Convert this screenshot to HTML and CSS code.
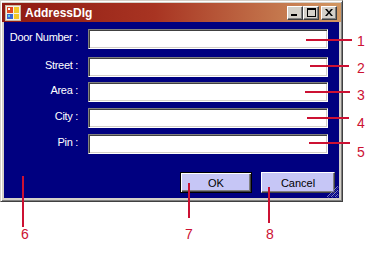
FILE: index.html
```html
<!DOCTYPE html>
<html lang="en">
<head>
    <meta charset="UTF-8">
    <title>AddressDlg</title>
    <link rel="stylesheet" href="styles.css">
</head>
<body>
    <div class="window">
        <div class="titlebar">
            <svg class="app-icon" width="16" height="16" viewBox="0 0 16 16">
                <rect x="0.5" y="0.5" width="15" height="15" fill="#f4f0e8" stroke="#c8b8a0"/>
                <rect x="2" y="2" width="6" height="6" fill="#e04a20"/>
                <rect x="9" y="2" width="5" height="6" fill="#f2c828"/>
                <rect x="2" y="9" width="6" height="5" fill="#3a66d0"/>
                <rect x="3" y="10" width="2" height="2" fill="#60d0e0"/>
                <rect x="9" y="9" width="5" height="5" fill="#f2c828"/>
                <rect x="3" y="3" width="2" height="2" fill="#ffffff"/>
            </svg>
            <span class="title">AddressDlg</span>
            <div class="caption-buttons">
                <div class="cap">
                    <svg width="8" height="7" viewBox="0 0 8 7"><rect x="0" y="5" width="6" height="2" fill="#000"/></svg>
                </div>
                <div class="cap">
                    <svg width="9" height="9" viewBox="0 0 9 9"><rect x="0.5" y="0.5" width="8" height="8" fill="none" stroke="#000"/><rect x="0" y="0" width="9" height="2" fill="#000"/></svg>
                </div>
                <div class="cap close">
                    <svg width="8" height="7" viewBox="0 0 8 7"><path d="M0 0h2l2 2.5 2-2.5h2l-3 3.5 3 3.5h-2l-2-2.5-2 2.5h-2l3-3.5z" fill="#000"/></svg>
                </div>
            </div>
        </div>

        <div class="client">
            <div class="fields">
                <div class="row">
                    <label for="door">Door Number :</label>
                    <input type="text" id="door">
                </div>
                <div class="row">
                    <label for="street">Street :</label>
                    <input type="text" id="street">
                </div>
                <div class="row">
                    <label for="area">Area :</label>
                    <input type="text" id="area">
                </div>
                <div class="row">
                    <label for="city">City :</label>
                    <input type="text" id="city">
                </div>
                <div class="row">
                    <label for="pin">Pin :</label>
                    <input type="text" id="pin">
                </div>
            </div>

            <div class="actions">
                <button class="btn default">OK</button>
                <button class="btn">Cancel</button>
            </div>

            <svg class="grip" width="13" height="13" viewBox="0 0 13 13">
                <path d="M12 1L1 12M12 5L5 12M12 9L9 12" stroke="#8080c0" stroke-width="1"/>
                <path d="M13 2L2 13M13 6L6 13M13 10L10 13" stroke="#3030a0" stroke-width="1"/>
            </svg>
        </div>
    </div>

    <svg class="callouts" width="386" height="263" viewBox="0 0 386 263">
        <g stroke="#cc1133" stroke-width="2">
            <line x1="306" y1="40" x2="352" y2="40"/>
            <line x1="310" y1="66" x2="349" y2="66"/>
            <line x1="305" y1="92" x2="350" y2="92"/>
            <line x1="307" y1="118" x2="349" y2="118"/>
            <line x1="309" y1="143" x2="350" y2="143"/>
            <line x1="23" y1="176" x2="23" y2="227"/>
            <line x1="189" y1="183" x2="189" y2="218"/>
            <line x1="269" y1="187" x2="269" y2="223"/>
        </g>
        <g class="nums">
            <text x="357" y="46">1</text>
            <text x="357" y="73">2</text>
            <text x="357" y="100">3</text>
            <text x="357" y="128">4</text>
            <text x="357" y="157">5</text>
            <text x="21" y="239">6</text>
            <text x="185" y="239">7</text>
            <text x="266" y="239">8</text>
        </g>
    </svg>
</body>
</html>
```

FILE: styles.css
```css
body {
    margin: 0;
    background-color: #ffffff;
    font-family: "Liberation Sans", Arial, sans-serif;
    font-size: 11px;
    position: relative;
    width: 386px;
    height: 263px;
    overflow: hidden;
}
.window {
    width: 343px;
    height: 202px;
    box-sizing: border-box;
    background-color: #d4d0c8;
    border: 1px solid;
    border-color: #d4d0c8 #404040 #404040 #d4d0c8;
    box-shadow: inset 1px 1px #ffffff, inset -1px -1px #808080;
    padding: 2px 3px 3px 3px;
    display: flex;
    flex-direction: column;
}
.titlebar {
    height: 19px;
    display: flex;
    align-items: center;
    background: linear-gradient(to right, #8e1a12, #a83422 45%, #d29862);
    margin-left: -2px;
    margin-right: -2px;
    padding-left: 3px;
    padding-right: 4px;
}
.app-icon {
    display: block;
    flex: none;
}
.title {
    margin-left: 4px;
    color: #ffffff;
    font-weight: bold;
    font-size: 12px;
}
.caption-buttons {
    margin-left: auto;
    display: flex;
}
.cap {
    width: 16px;
    height: 14px;
    box-sizing: border-box;
    background-color: #d4d0c8;
    border: 1px solid;
    border-color: #ffffff #404040 #404040 #ffffff;
    box-shadow: inset -1px -1px #808080;
    display: flex;
    align-items: center;
    justify-content: center;
}
.cap svg {
    display: block;
}
.cap.close {
    margin-left: 2px;
}
.client {
    flex: 1;
    position: relative;
    background-color: #000080;
    display: flex;
    flex-direction: column;
}
.fields {
    margin-top: 7px;
    display: flex;
    flex-direction: column;
}
.row {
    display: flex;
    align-items: flex-start;
    height: 20px;
    margin-top: 6px;
}
.row:first-child {
    margin-top: 0;
}
.row:nth-child(2) {
    margin-top: 8px;
}
.row:nth-child(3) {
    margin-top: 5px;
}
.row label {
    width: 74px;
    text-align: right;
    color: #ffffff;
    line-height: 13px;
    padding-top: 2px;
    letter-spacing: -0.3px;
}
.row input {
    margin: 0 0 0 10px;
    width: 240px;
    height: 20px;
    box-sizing: border-box;
    padding: 0 3px;
    background-color: #ffffff;
    border: 1px solid;
    border-color: #808080 #ffffff #ffffff #808080;
    box-shadow: inset 1px 1px #404040, inset -1px -1px #d4d0c8;
    outline: none;
    font-family: inherit;
    font-size: 11px;
}
.actions {
    margin-top: 18px;
    display: flex;
    justify-content: flex-end;
    gap: 9px;
    padding-right: 4px;
}
.btn {
    height: 21px;
    width: 74px;
    box-sizing: border-box;
    padding: 0;
    background-color: #c6c6f6;
    border: 1px solid;
    border-color: #ffffff #404040 #404040 #ffffff;
    box-shadow: inset -1px -1px #808080;
    font-family: inherit;
    font-size: 11px;
    color: #000000;
}
.btn.default {
    width: 72px;
    border: 1px solid #000000;
    box-shadow: inset 1px 1px #ffffff, inset -1px -1px #404040, inset -2px -2px #808080;
}
.grip {
    position: absolute;
    right: 0;
    bottom: 0;
}
.callouts {
    position: absolute;
    left: 0;
    top: 0;
    pointer-events: none;
}
.nums text {
    fill: #cc1133;
    font-family: "Liberation Sans", Arial, sans-serif;
    font-size: 14px;
}
```
